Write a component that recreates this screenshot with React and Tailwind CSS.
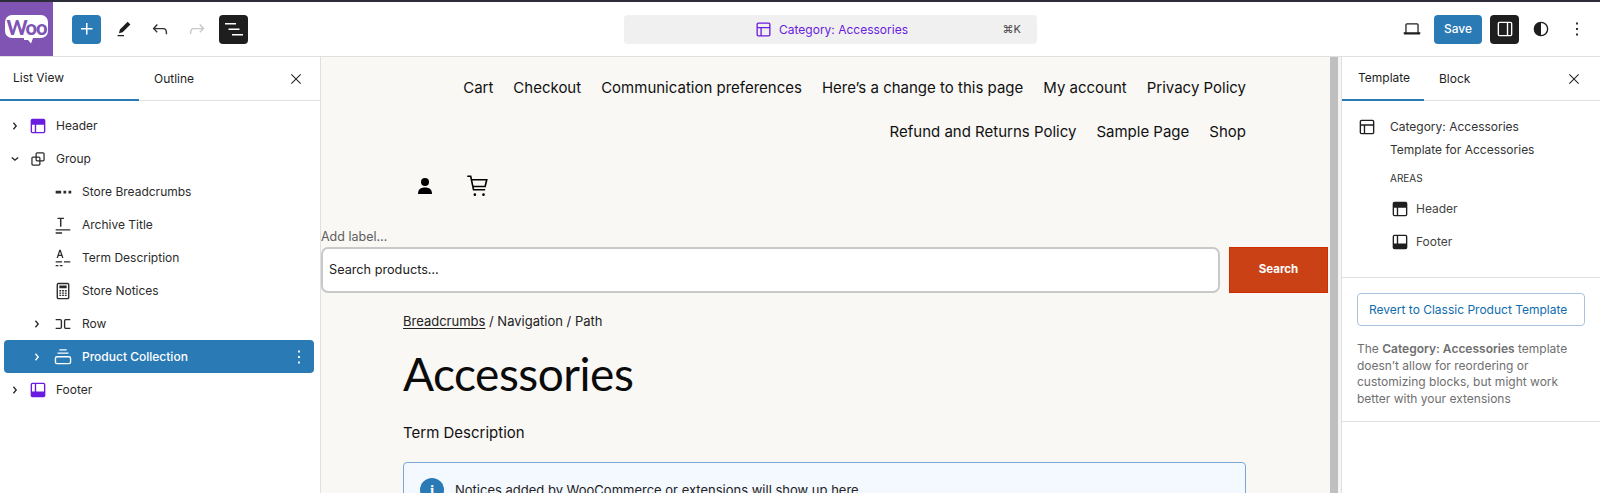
const Ic = ({ d, size = 24, className = "" }) => (
  <svg viewBox="0 0 24 24" width={size} height={size} className={className} fill="currentColor" fillRule="evenodd" clipRule="evenodd">
    <path d={d} />
  </svg>
)

const paths = {
  plus: "M11 12.5V17.5H12.5V12.5H17.5V11H12.5V6H11V11H6V12.5H11Z",
  pen: "m19 7-3-3-8.500 8.500-1 4 4-1L19 7Zm-7 11.500H5V20h7v-1.500Z",
  undo: "M18.300 11.700c-.6-.6-1.400-.9-2.300-.9H6.700l2.900-3.300-1.100-1-4.500 5L8.500 16l1-1-2.700-2.700H16c.5 0 .9.2 1.300.5 1 1 1 3.400 1 4.500v.3h1.500v-.2c0-1.500 0-4.300-1.500-5.700z",
  redo: "M15.600 6.500l-1.100 1 2.900 3.300H8c-.9 0-1.700.3-2.300.9-1.400 1.500-1.400 4.200-1.400 5.600v.2h1.500v-.3c0-1.100 0-3.500 1-4.500.3-.3.7-.5 1.300-.5h9.200L14.500 15l1.100 1.100 4.600-4.600-4.600-5z",
  listView: "M3 6h11v1.500H3V6Zm3.500 5.500h11V13h-11v-1.500ZM21 17H10v1.500h11V17Z",
  layout: "M18 5.500H6a.5.5 0 0 0-.5.5v3h13V6a.5.5 0 0 0-.5-.5Zm.5 5H10v8h8a.5.5 0 0 0 .5-.5v-7.500Zm-10 0h-3V18a.5.5 0 0 0 .5.5h2.500v-8ZM6 4h12a2 2 0 0 1 2 2v12a2 2 0 0 1-2 2H6a2 2 0 0 1-2-2V6a2 2 0 0 1 2-2Z",
  header: "M18.500 10.500H10v8h8a.5.5 0 00.5-.5v-7.500zm-10 0h-3V18a.5.5 0 00.5.5h2.500v-8zM6 4h12a2 2 0 012 2v12a2 2 0 01-2 2H6a2 2 0 01-2-2V6a2 2 0 012-2z",
  footer: "M18 5.500h-8v8h8.500V6a.5.5 0 00-.5-.5zm-9.500 8h-3V6a.5.5 0 01.5-.5h2.500v8zM6 4h12a2 2 0 012 2v12a2 2 0 01-2 2H6a2 2 0 01-2-2V6a2 2 0 012-2z",
  group: "M18 4h-7c-1.100 0-2 .9-2 2v3H6c-1.100 0-2 .9-2 2v7c0 1.100.9 2 2 2h7c1.100 0 2-.9 2-2v-3h3c1.100 0 2-.9 2-2V6c0-1.100-.9-2-2-2zm-4.500 14c0 .3-.2.5-.5.5H6c-.3 0-.5-.2-.5-.5v-7c0-.3.2-.5.5-.5h3V13c0 1.100.9 2 2 2h2.500v3zm0-4.500H11c-.3 0-.5-.2-.5-.5v-2.500H13c.3 0 .5.2.5.5v2.500zm5-.5c0 .3-.2.5-.5.5h-3V11c0-1.100-.9-2-2-2h-2.500V6c0-.3.2-.5.5-.5h7c.3 0 .5.2.5.5v7z",
  row: "M4 6.500h5a2 2 0 0 1 2 2v7a2 2 0 0 1-2 2H4V16h5a.5.5 0 0 0 .5-.5v-7A.5.5 0 0 0 9 8H4V6.500Zm16 0h-5a2 2 0 0 0-2 2v7a2 2 0 0 0 2 2h5V16h-5a.5.5 0 0 1-.5-.5v-7A.5.5 0 0 1 15 8h5V6.500Z",
  right: "M10.862 8.040L14.280 12.028L10.862 16.016L9.723 15.040L12.304 12.028L9.723 9.016L10.862 8.040Z",
  down: "M15.958 10.862L11.970 14.280L7.982 10.862L8.958 9.723L11.970 12.304L14.982 9.723L15.958 10.862Z",
  close: "m13.060 12 6.470-6.470-1.060-1.060L12 10.940 5.530 4.470 4.470 5.530 10.940 12l-6.470 6.470 1.060 1.060L12 13.060l6.470 6.470 1.060-1.060L13.060 12Z",
  more: "M13 19h-2v-2h2v2zm0-6h-2v-2h2v2zm0-6h-2V5h2v2z",
  crumbs: "M4 10.500h6v3H4zM12.500 10.500h3v3h-3zM18 10.500h3v3h-3z",
  title: "M4 16.500h16V18H4zM4 20h7v1.500H4zM6 4h7v1.500h-2.700V14H8.700V5.500H6z",
  term: "M4 15.500h7V17H4zM13 15.500h7V17h-7zM4 19.500h3V21H4zM8.500 19.500h3V21h-3zM8 3h1.500l3 9H11l-.7-2.300H7.200L6.500 12H5l3-9zm.7 2.200L7.600 8.500h2.300L8.800 5.200z",
  notices: "M7 3h10a2 2 0 0 1 2 2v14a2 2 0 0 1-2 2H7a2 2 0 0 1-2-2V5a2 2 0 0 1 2-2Zm0 1.500a.5.5 0 0 0-.5.5v14a.5.5 0 0 0 .5.5h10a.5.5 0 0 0 .5-.5V5a.5.5 0 0 0-.5-.5H7ZM8 6h8v3H8V6Zm0 5h2v1.500H8V11Zm3 0h2v1.500h-2V11Zm3 0h2v1.500h-2V11Zm-6 2.500h2V15H8v-1.500Zm3 0h2V15h-2v-1.500Zm3 0h2V15h-2v-1.500ZM8 16h2v1.500H8V16Zm3 0h2v1.500h-2V16Zm3 0h2v1.500h-2V16Z",
  collection: "M8 3.500h8V5H8V3.500ZM6 7h12v1.500H6V7Zm-.5 4h13a2.500 2.500 0 0 1 2.500 2.500v4a2.500 2.500 0 0 1-2.500 2.500h-13A2.500 2.500 0 0 1 3 17.500v-4A2.500 2.500 0 0 1 5.500 11Zm0 1.500a1 1 0 0 0-1 1v4a1 1 0 0 0 1 1h13a1 1 0 0 0 1-1v-4a1 1 0 0 0-1-1h-13Z",
  laptop: "M20 16V7a2 2 0 0 0-2-2H6a2 2 0 0 0-2 2v9H2v1.500a1 1 0 0 0 1 1h18a1 1 0 0 0 1-1V16h-2ZM5.500 7a.5.5 0 0 1 .5-.5h12a.5.5 0 0 1 .5.5v9h-13V7Z",
  drawer: "M18 4H6a2 2 0 0 0-2 2v12a2 2 0 0 0 2 2h12a2 2 0 0 0 2-2V6a2 2 0 0 0-2-2ZM5.500 18V6a.5.5 0 0 1 .5-.5h8v13H6a.5.5 0 0 1-.5-.5Zm13 0a.5.5 0 0 1-.5.5h-2.500v-13H18a.5.5 0 0 1 .5.5v12Z",
  contrast: "M12 4a8 8 0 1 0 0 16 8 8 0 0 0 0-16Zm0 14.500V5.500a6.500 6.500 0 0 1 0 13Z",
  cart: "M3 3h3.200l2.600 12.500H19.500M6.800 6.200H21L19.500 12.500H8.200",
}

const listItems = [
  { label: "Header", icon: "header", depth: 0, caret: "right", iconColor: "text-[#6a1be0]" },
  { label: "Group", icon: "group", depth: 0, caret: "down", iconSize: 20 },
  { label: "Store Breadcrumbs", icon: "crumbs", depth: 1 },
  { label: "Archive Title", icon: "title", depth: 1 },
  { label: "Term Description", icon: "term", depth: 1 },
  { label: "Store Notices", icon: "notices", depth: 1 },
  { label: "Row", icon: "row", depth: 1, caret: "right" },
  { label: "Product Collection", icon: "collection", depth: 1, caret: "right", selected: true },
  { label: "Footer", icon: "footer", depth: 0, caret: "right", iconColor: "text-[#6a1be0]" },
]

const ListRow = ({ item }) => (
  <div
    className={
      item.selected
        ? "flex h-[33px] items-center rounded-sm bg-[#2a7ab5] text-white font-medium"
        : "flex h-[33px] items-center text-[#2b2b2b]"
    }
  >
    <div className={item.depth === 1 ? "w-[25px] shrink-0" : "w-[3px] shrink-0"} />
    <div className="w-[16px] shrink-0 flex justify-center">
      {item.caret && <Ic d={paths[item.caret]} size={22} className="shrink-0" />}
    </div>
    <div className={(item.depth === 1 ? "ml-[6px] " : "ml-[3px] ") + "w-[24px] shrink-0 flex justify-center"}>
      <Ic d={paths[item.icon]} size={item.iconSize || 22} className={item.iconColor || ""} />
    </div>
    <span className={(item.depth === 1 ? "ml-[7px]" : "ml-[6px]") + " flex-1"}>{item.label}</span>
    {item.selected && <Ic d={paths.more} size={22} className="mr-[4px]" />}
  </div>
)

const App = () => {
  return (
    <div className="w-[1600px] h-[493px] overflow-hidden flex flex-col bg-white border-t-2 border-[#2c2c3a] font-['Inter',sans-serif] text-[12px] text-[#1e1e1e]">
      <header className="h-[55px] shrink-0 flex items-center border-b border-[#e0e0e0]">
        <div className="w-[53px] h-full bg-[#7f54b3] flex items-center justify-center relative">
          <div className="w-[43px] h-[23px] bg-white rounded-[7px] flex items-center justify-center text-[#7f54b3] font-['Lato',sans-serif] font-black text-[20px] tracking-[-1px] leading-none -mt-[5px]">
            Woo
          </div>
          <svg width="10" height="6" viewBox="0 0 10 6" className="absolute left-[24px] top-[36px] text-white" fill="currentColor">
            <path d="M0 0h9L7 5.500 4 2H0z" />
          </svg>
        </div>
        <button className="ml-[19px] w-[29px] h-[29px] bg-[#2a7ab5] rounded-sm flex items-center justify-center text-white">
          <Ic d={paths.plus} />
        </button>
        <Ic d={paths.pen} size={22} className="ml-[12px]" />
        <Ic d={paths.undo} size={22} className="ml-[14px] text-[#333]" />
        <Ic d={paths.redo} size={22} className="ml-[15px] text-[#c8c8c8]" />
        <button className="ml-[11px] w-[29px] h-[29px] bg-[#1e1e1e] rounded-sm flex items-center justify-center text-white">
          <Ic d={paths.listView} />
        </button>
        <div className="ml-[376px] w-[413px] h-[29px] bg-[#f0f0f0] rounded-[4px] flex items-center relative">
          <div className="flex-1 flex items-center justify-center text-[#6a1be0] pt-[1px]">
            <Ic d={paths.layout} size={21} className="mr-[5px] -mt-[1px]" />
            <span>Category: Accessories</span>
          </div>
          <span className="absolute right-[16px] text-[11px] text-[#444]">⌘K</span>
        </div>
        <Ic d={paths.laptop} size={20} className="ml-[365px]" />
        <button className="ml-[12px] w-[48px] h-[29px] bg-[#2a7ab5] rounded-sm text-white font-medium">Save</button>
        <button className="ml-[8px] w-[29px] h-[29px] bg-[#1e1e1e] rounded-sm flex items-center justify-center text-white">
          <Ic d={paths.drawer} size={22} />
        </button>
        <Ic d={paths.contrast} size={22} className="ml-[11px]" />
        <Ic d={paths.more} size={22} className="ml-[14px]" />
      </header>

      <div className="flex-1 flex min-h-0">
        <aside className="w-[321px] shrink-0 border-r border-[#e0e0e0] flex flex-col">
          <div className="h-[44px] shrink-0 flex items-center border-b border-[#e0e0e0] relative">
            <div className="w-[139px] h-full flex items-center pl-[13px] border-b-2 border-[#2a7ab5] -mb-px">List View</div>
            <span className="ml-[15px]">Outline</span>
            <Ic d={paths.close} size={16} className="ml-auto mr-[16px]" />
          </div>
          <div className="pl-[4px] pr-[6px] pt-[8px] flex flex-col">
            {listItems.map((item) => (
              <ListRow key={item.label} item={item} />
            ))}
          </div>
        </aside>

        <main className="w-[1009px] shrink-0 bg-[#f9f8f5] overflow-hidden pr-[2px]">
          <nav className="pl-[82px] pr-[82px] pt-[9px] flex flex-wrap justify-end gap-x-[20px] text-[15px] leading-[44px] text-[#111]">
            {["Cart", "Checkout", "Communication preferences", "Here’s a change to this page", "My account", "Privacy Policy", "Refund and Returns Policy", "Sample Page", "Shop"].map((n) => (
              <span key={n}>{n}</span>
            ))}
          </nav>
          <div className="pl-[92px] pt-[17px] flex items-center gap-[27px] h-[46px] text-black">
            <svg width="24" height="24" viewBox="0 0 24 24" fill="currentColor">
              <circle cx="12" cy="8" r="4" />
              <path d="M5 20c0-4.500 2.500-6.500 7-6.500s7 2 7 6.500H5Z" />
            </svg>
            <svg width="26" height="26" viewBox="0 0 24 24" fill="none" stroke="currentColor" strokeWidth="1.500">
              <path d={paths.cart} />
              <circle cx="10" cy="20" r="1.200" fill="currentColor" stroke="none" />
              <circle cx="18" cy="20" r="1.200" fill="currentColor" stroke="none" />
            </svg>
          </div>
          <div className="mt-[26px] text-[12.5px] leading-[21px] text-[#5d5d5d]">Add label…</div>
          <div className="flex gap-[9px] h-[46px]">
            <div className="flex-1 bg-white border-2 border-[#c9c9c9] rounded-[7px] flex items-center pl-[6px] text-[12.7px] text-[#222]">
              Search products…
            </div>
            <button className="w-[99px] bg-[#c94115] border border-[#d12e00] text-white text-[11.5px] font-bold">Search</button>
          </div>
          <div className="pl-[82px] pr-[82px]">
            <div className="mt-[18px] text-[13px] leading-[20px] text-[#222]">
              <span className="underline underline-offset-2">Breadcrumbs</span> / Navigation / Path
            </div>
            <h1 className="mt-[15px] text-[46px] leading-[56px] font-['Lato',sans-serif] text-[#0b0b0b] tracking-[-0.5px]">Accessories</h1>
            <div className="mt-[19px] text-[15px] leading-[24px] text-[#111]">Term Description</div>
            <div className="mt-[17px] h-[60px] bg-[#f4f8ff] border border-[#7ba7d6] rounded-sm flex items-start pt-[15px] pl-[16px] text-[13px] text-[#222]">
              <span className="w-[24px] h-[24px] shrink-0 rounded-full bg-[#2a7ab5] flex items-center justify-center text-white text-[15px] font-bold font-['Liberation_Serif',serif]">i</span>
              <span className="ml-[11px] leading-[24px]">Notices added by WooCommerce or extensions will show up here.</span>
            </div>
          </div>
        </main>

        <div className="w-[8px] shrink-0 bg-[#bfbfbf]" />
        <div className="w-[3px] shrink-0 bg-[#f5f5f5]" />

        <aside className="flex-1 border-l border-[#e0e0e0] flex flex-col">
          <div className="h-[44px] shrink-0 flex items-center border-b border-[#e0e0e0]">
            <div className="w-[82px] h-full flex items-center pl-[16px] border-b-2 border-[#2a7ab5] -mb-px">Template</div>
            <span className="ml-[15px]">Block</span>
            <Ic d={paths.close} size={16} className="ml-auto mr-[18px]" />
          </div>
          <div className="h-[177px] shrink-0 border-b border-[#e0e0e0] pl-[16px] pt-[16px] text-[#333]">
            <div className="flex items-center h-[20px]">
              <Ic d={paths.layout} size={22} className="text-[#1e1e1e] -ml-[2px] shrink-0" />
              <span className="ml-[12px]">Category: Accessories</span>
            </div>
            <div className="ml-[32px] mt-[3px] leading-[20px]">Template for Accessories</div>
            <div className="ml-[32px] mt-[9px] text-[10px] leading-[18px]">AREAS</div>
            <div className="ml-[32px] mt-[5px] flex items-center h-[33px] text-[#444]">
              <Ic d={paths.header} size={22} className="text-[#1e1e1e] -ml-[1px]" />
              <span className="ml-[5px]">Header</span>
            </div>
            <div className="ml-[32px] flex items-center h-[33px] text-[#444]">
              <Ic d={paths.footer} size={22} className="text-[#1e1e1e] -ml-[1px]" />
              <span className="ml-[5px]">Footer</span>
            </div>
          </div>
          <div className="border-b border-[#e0e0e0] px-[15px] pt-[15px] h-[144px] shrink-0">
            <button className="w-[228px] h-[33px] border border-[#a9c4df] rounded-sm text-left pl-[11px] text-[#0f6cb0]">
              Revert to Classic Product Template
            </button>
            <p className="mt-[15px] leading-[16.5px] text-[#6f6f6f]">
              The <b className="font-semibold">Category: Accessories</b> template doesn’t allow for reordering or customizing blocks, but might work better with your extensions
            </p>
          </div>
        </aside>
      </div>
    </div>
  )
}

export default App
